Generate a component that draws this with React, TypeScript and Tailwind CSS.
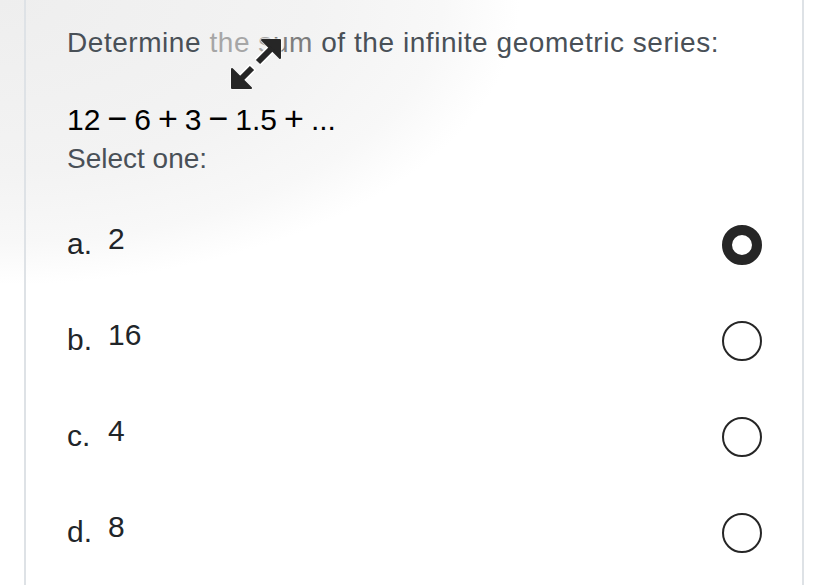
import React from 'react';

const options = [
  { letter: 'a.', value: '2', checked: true },
  { letter: 'b.', value: '16', checked: false },
  { letter: 'c.', value: '4', checked: false },
  { letter: 'd.', value: '8', checked: false },
];

function ResizeCursor() {
  return (
    <svg
      className="absolute left-[228px] top-[37px]"
      width="56"
      height="56"
      viewBox="0 0 56 56"
    >
      <g stroke="#ffffff" strokeWidth="3" fill="#ffffff" strokeLinejoin="round">
        <polygon points="52,3 52,21 34,3" />
        <line x1="44" y1="11" x2="30" y2="25" strokeWidth="9" />
        <polygon points="4,51 4,32 23,51" />
        <line x1="12" y1="43" x2="25" y2="30" strokeWidth="9" />
      </g>
      <g stroke="#262626" fill="#262626" strokeLinejoin="round">
        <polygon points="52,3 52,21 34,3" strokeWidth="2" />
        <line x1="44" y1="11" x2="30" y2="25" strokeWidth="6" />
        <polygon points="4,51 4,32 23,51" strokeWidth="2" />
        <line x1="12" y1="43" x2="24" y2="31" strokeWidth="6" />
      </g>
    </svg>
  );
}

function Op({ children }: { children: React.ReactNode }) {
  return <span className="mx-[7px] text-[34px]">{children}</span>;
}

export default function App() {
  return (
    <div className="relative w-[828px] h-[585px] overflow-hidden bg-white font-['Liberation_Sans',Arial,sans-serif]">
      {/* soft shading from the top-left corner */}
      <div className="absolute inset-0 bg-[radial-gradient(ellipse_520px_285px_at_0%_0%,#eeeeee_0%,#f3f3f3_60%,#f8f8f8_85%,#ffffff_100%)]" />

      <div className="relative mx-[24px] h-full border-x-2 border-[#dee2e6] pl-[41px] pr-[40px] pt-[22px]">
        <p className="h-[42px] text-[28px] leading-[42px] tracking-[0.55px] text-[#495057] whitespace-nowrap">
          Determine <span className="text-[#a6a6a6]">the s</span>
          <span className="text-[#7d7d7d]">um</span> of the infinite geometric series:
        </p>

        <p className="mt-[36px] h-[36px] text-[30px] leading-[36px] text-black whitespace-nowrap">
          12<Op>−</Op>6<Op>+</Op>3<Op>−</Op>1.5<Op>+</Op>...
        </p>

        <p className="mt-[5px] h-[36px] text-[28px] leading-[36px] text-[#495057]">Select one:</p>

        <div className="mt-[20px] flex flex-col">
          {options.map((o) => (
            <div key={o.letter} className="flex h-[96px] items-center justify-between">
              <div className="text-[30px] leading-none text-[#212529] -translate-y-[1px]">
                <span className="inline-block w-[41px]">{o.letter}</span>
                <span className="relative -top-[5px]">{o.value}</span>
              </div>
              {o.checked ? (
                <div className="h-[40px] w-[40px] rounded-full border-[10px] border-[#262626]" />
              ) : (
                <div className="h-[40px] w-[40px] rounded-full border-2 border-[#262626]" />
              )}
            </div>
          ))}
        </div>
      </div>

      <ResizeCursor />
    </div>
  );
}
